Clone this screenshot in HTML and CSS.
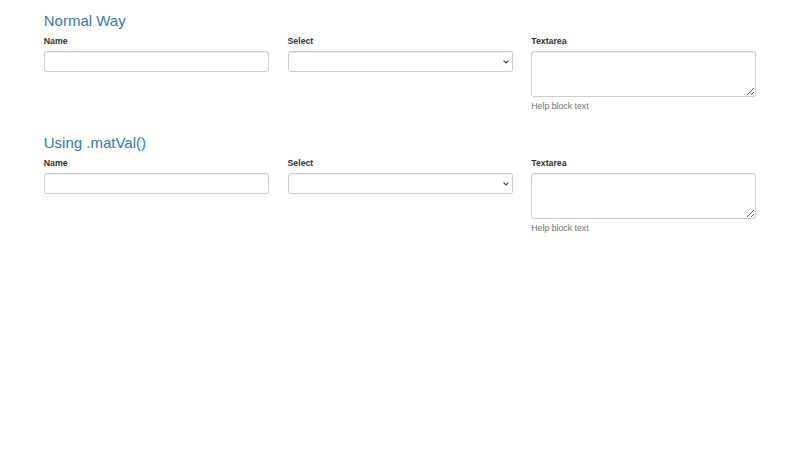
FILE: index.html
```html
<!DOCTYPE html>
<html lang="en">
<head>
<meta charset="utf-8">
<title>Forms</title>
<link rel="stylesheet" href="styles.css">
</head>
<body>
<div class="container">
  <section class="section">
    <h3 class="title">Normal Way</h3>
    <div class="row">
      <div class="col">
        <div class="form-group">
          <label class="label" for="n1">Name</label>
          <input class="control" id="n1" type="text">
        </div>
      </div>
      <div class="col">
        <div class="form-group">
          <label class="label" for="s1">Select</label>
          <select class="control select" id="s1"><option></option></select>
        </div>
      </div>
      <div class="col">
        <div class="form-group">
          <label class="label" for="t1">Textarea</label>
          <textarea class="control area" id="t1" rows="3"></textarea>
          <p class="help">Help block text</p>
        </div>
      </div>
    </div>
  </section>
  <section class="section">
    <h3 class="title">Using .matVal()</h3>
    <div class="row">
      <div class="col">
        <div class="form-group">
          <label class="label" for="n2">Name</label>
          <input class="control" id="n2" type="text">
        </div>
      </div>
      <div class="col">
        <div class="form-group">
          <label class="label" for="s2">Select</label>
          <select class="control select" id="s2"><option></option></select>
        </div>
      </div>
      <div class="col">
        <div class="form-group">
          <label class="label" for="t2">Textarea</label>
          <textarea class="control area" id="t2" rows="3"></textarea>
          <p class="help">Help block text</p>
        </div>
      </div>
    </div>
  </section>
</div>
</body>
</html>
```
FILE: styles.css
```css
html, body {
  margin: 0;
  padding: 0;
  background: #fff;
}
body {
  font-family: "Liberation Sans", Arial, sans-serif;
  font-size: 8.75px;
  line-height: 12.5px;
  color: #333;
}
.container {
  width: 712.5px;
  margin: 0 auto;
}
.section {
  display: flow-root;
}
.title {
  margin: 12.5px 0 6.25px;
  font-size: 15px;
  line-height: 16.5px;
  font-weight: 500;
  color: #337ab7;
}
.row {
  display: grid;
  grid-template-columns: repeat(3, 1fr);
  column-gap: 18.75px;
}
.col {
  display: flow-root;
}
.form-group {
  margin-bottom: 9.375px;
}
.label {
  display: block;
  font-weight: bold;
  margin-bottom: 3.125px;
  line-height: 12.5px;
}
.control {
  display: block;
  box-sizing: border-box;
  width: 100%;
  height: 21.25px;
  margin: 0;
  padding: 3.75px 7.5px;
  font-family: inherit;
  font-size: 8.75px;
  line-height: 12.5px;
  color: #555;
  background-color: #fff;
  border: 1px solid #ccc;
  border-radius: 2.5px;
  box-shadow: inset 0 1px 1px rgba(0, 0, 0, 0.075);
}
.select {
  -webkit-appearance: none;
  appearance: none;
  padding: 2px 14px 2px 4px;
  background-image: url("data:image/svg+xml,%3Csvg xmlns='http://www.w3.org/2000/svg' width='6' height='4' viewBox='0 0 6 4'%3E%3Cpath d='M0.6 0.6 L3 3 L5.4 0.6' fill='none' stroke='%23444' stroke-width='1.1'/%3E%3C/svg%3E");
  background-repeat: no-repeat;
  background-position: right 3px center;
  background-size: 6px 4px;
}
.area {
  height: 46.25px;
  resize: vertical;
}
.help {
  margin: 3.125px 0 6.25px;
  color: #737373;
}
```
